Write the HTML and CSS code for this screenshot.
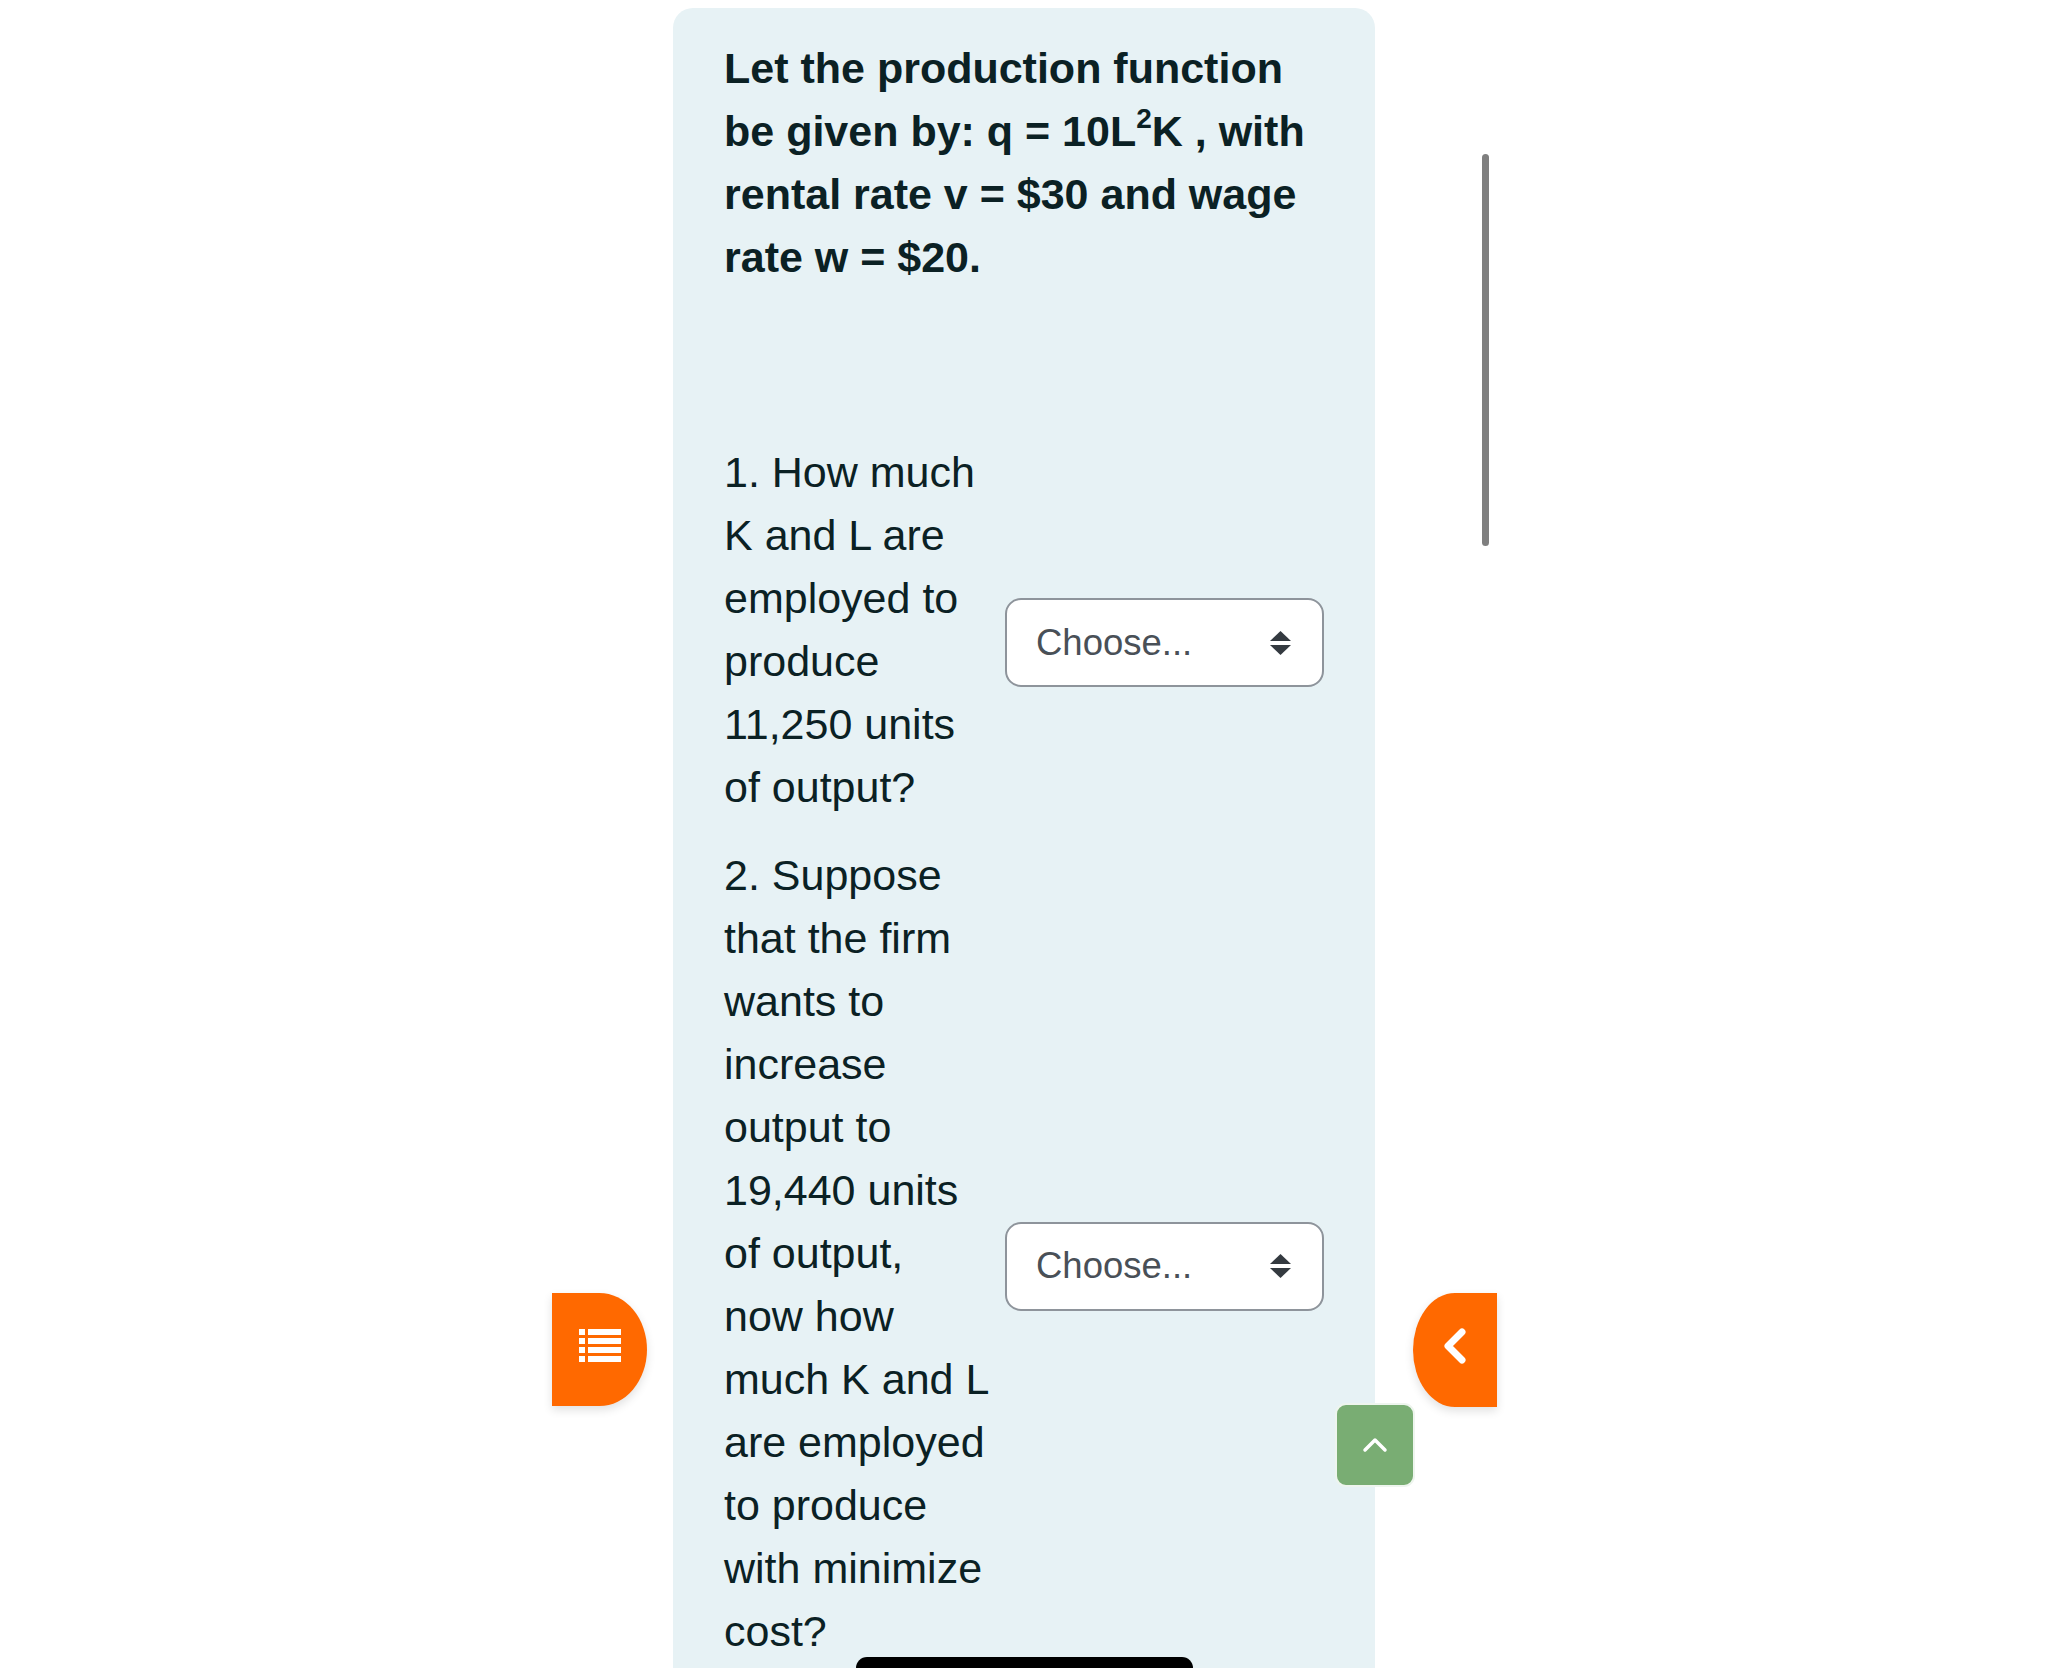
FILE: index.html
```html
<!DOCTYPE html>
<html lang="en">
  <head>
    <meta charset="UTF-8" />
    <meta name="viewport" content="width=device-width, initial-scale=1.0" />
    <title>Quiz</title>
    <link rel="stylesheet" href="styles.css">
  </head>
  <body>
    <div class="card">
      <p class="stem">Let the production function be given by: q = 10L<sup>2</sup>K , with rental rate v = $30 and wage rate w = $20.</p>
      <div class="answers">
        <p class="q">1. How much K and L are employed to produce 11,250 units of output?</p>
        <div class="pick">
          <span>Choose...</span>
          <svg width="21" height="24" viewBox="0 0 21 24"><polygon points="0,10 10.5,0 21,10" /><polygon points="0,14 21,14 10.5,24" /></svg>
        </div>
        <p class="q">2. Suppose that the firm wants to increase output to 19,440 units of output, now how much K and L are employed to produce with minimize cost?</p>
        <div class="pick">
          <span>Choose...</span>
          <svg width="21" height="24" viewBox="0 0 21 24"><polygon points="0,10 10.5,0 21,10" /><polygon points="0,14 21,14 10.5,24" /></svg>
        </div>
      </div>
    </div>

    <div class="toc-btn">
      <svg width="42" height="33" viewBox="0 0 42 33" fill="#fff">
        <rect x="0" y="0" width="6" height="6" /><rect x="9" y="0" width="33" height="6" />
        <rect x="0" y="9" width="6" height="6" /><rect x="9" y="9" width="33" height="6" />
        <rect x="0" y="18" width="6" height="6" /><rect x="9" y="18" width="33" height="6" />
        <rect x="0" y="27" width="6" height="6" /><rect x="9" y="27" width="33" height="6" />
      </svg>
    </div>
    <div class="drawer-btn">
      <svg width="28" height="40" viewBox="0 0 28 40"><polyline points="21,6 7,20 21,34" /></svg>
    </div>
    <div class="top-btn">
      <svg width="26" height="16" viewBox="0 0 26 16"><polyline points="3,13 13,3 23,13" /></svg>
    </div>
    <div class="scroll-thumb"></div>
    <div class="home-bar"></div>
  </body>
</html>
```

FILE: styles.css
```css
html {
  overflow: hidden;
}

body {
  margin: 8px 0 0;
  background-color: #fff;
  font-family: "Liberation Sans", Arial, sans-serif;
  color: #0b2124;
}

.card {
  width: 600px;
  min-height: 1700px;
  margin: 0 auto;
  padding: 29px 51px 0 51px;
  border-radius: 20px 20px 0 0;
  background-color: #e7f2f5;
}

.stem {
  margin: 0;
  font-size: 43px;
  line-height: 63px;
  font-weight: bold;
}
.stem sup {
  font-size: 28px;
  line-height: 0;
  vertical-align: 18px;
}

.answers {
  display: grid;
  grid-template-columns: 267px 1fr;
  column-gap: 14px;
  margin-top: 152px;
}

.q {
  margin: 0 0 25px;
  font-size: 43px;
  line-height: 63px;
}

.pick {
  align-self: center;
  box-sizing: border-box;
  height: 89px;
  padding: 0 31px 0 29px;
  display: flex;
  align-items: center;
  justify-content: space-between;
  border: 2px solid #8e949b;
  border-radius: 16px;
  background-color: #fff;
  font-size: 36.5px;
  color: #495057;
}
.pick svg {
  fill: #343a40;
}

/* floating controls */
.toc-btn,
.drawer-btn,
.top-btn {
  position: fixed;
  display: flex;
  align-items: center;
  justify-content: center;
  box-sizing: border-box;
}

.toc-btn {
  left: 552px;
  top: 1293px;
  width: 95px;
  height: 113px;
  padding-bottom: 8px;
  border-radius: 0 50% 50% 0;
  background-color: #ff6900;
  box-shadow: 0 4px 10px rgba(0, 0, 0, 0.12);
}

.drawer-btn {
  left: 1413px;
  top: 1293px;
  width: 84px;
  height: 114px;
  padding-bottom: 8px;
  border-radius: 50% 0 0 50%;
  background-color: #ff6900;
  box-shadow: 0 4px 10px rgba(0, 0, 0, 0.12);
}
.drawer-btn polyline {
  fill: none;
  stroke: #fff;
  stroke-width: 7;
  stroke-linecap: round;
  stroke-linejoin: round;
}

.top-btn {
  left: 1335px;
  top: 1403px;
  width: 80px;
  height: 84px;
  border: 2px solid #eef5ee;
  border-radius: 11px;
  background-color: #79ad73;
}
.top-btn polyline {
  fill: none;
  stroke: #fff;
  stroke-width: 3.5;
  stroke-linecap: round;
  stroke-linejoin: round;
}

.scroll-thumb {
  position: fixed;
  left: 1482px;
  top: 154px;
  width: 7px;
  height: 392px;
  border-radius: 4px;
  background-color: #7f7f7f;
}

.home-bar {
  position: fixed;
  left: 856px;
  top: 1657px;
  width: 337px;
  height: 22px;
  border-radius: 11px;
  background-color: #000;
}
```
